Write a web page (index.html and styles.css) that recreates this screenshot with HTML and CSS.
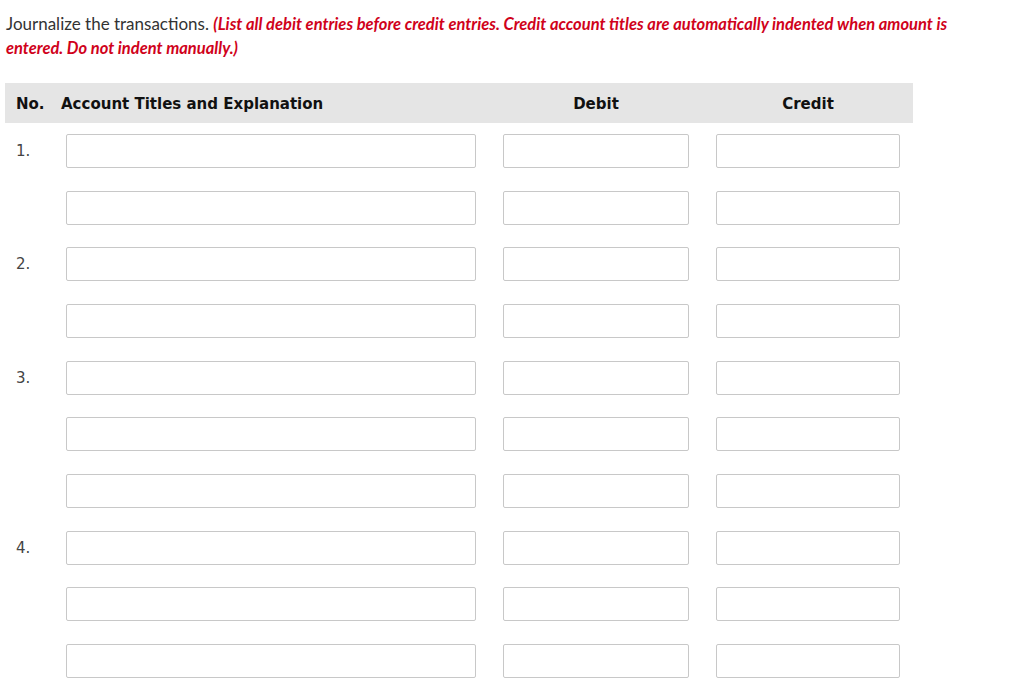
FILE: index.html
```html
<!DOCTYPE html>
<html lang="en">
<head>
  <meta charset="UTF-8" />
  <title>Journalize the transactions</title>
  <link rel="stylesheet" href="styles.css">
</head>
<body>

<p class="instr">Journalize the transactions. <em>(List all debit entries before credit entries. Credit account titles are automatically indented when amount is entered. Do not indent manually.)</em></p>

<div class="journal">
  <div class="jrow head">
    <div class="no">No.</div>
    <div class="acct">Account Titles and Explanation</div>
    <div class="amt">Debit</div>
    <div class="amt">Credit</div>
  </div>
  <div id="rows"></div>
</div>

<script>
const entries = [1, null, 2, null, 3, null, null, 4, null, null];
const rows = document.getElementById('rows');
entries.forEach(n => {
  const div = document.createElement('div');
  div.className = 'jrow line';
  div.innerHTML = `<div class="no">${n ? n + '.' : ''}</div>
    <div><input class="acct-in" type="text"></div>
    <div><input class="amt-in" type="text"></div>
    <div><input class="amt-in cr" type="text"></div>`;
  rows.appendChild(div);
});
</script>
</body>
</html>
```

FILE: styles.css
```css
* { margin: 0; padding: 0; box-sizing: border-box; }
body {
  font-family: Lato, sans-serif;
  background: white;
  color: #333;
}
.instr {
  font-size: 17px;
  line-height: 24px;
  padding: 12px 0 0 6px;
  width: 960px;
}
.instr em {
  color: #d0021b;
  font-size: 16.5px;
  line-height: 24px;
  font-weight: bold;
  font-style: italic;
}
.journal {
  margin: 23px 0 0 5px;
  width: 908px;
  font-family: "DejaVu Sans", Verdana, sans-serif;
}
.jrow {
  display: grid;
  grid-template-columns: 61px 437px 213px 184px;
  align-items: center;
}
.head {
  background: #e5e5e5;
  height: 40px;
  padding-top: 2px;
  font-weight: bold;
  font-size: 15px;
  color: #111;
  margin-bottom: 11px;
}
.head .no { padding-left: 11px; }
.head .acct { margin-left: -5px; white-space: nowrap; }
.head .amt { width: 186px; text-align: center; }
.head .amt:last-child { width: 184px; }
.line {
  height: 56.67px;
  align-items: start;
}
.line .no {
  padding-left: 11px;
  font-size: 15px;
  line-height: 34px;
  color: #444;
}
input {
  display: block;
  height: 34px;
  border: 1px solid #c8c8c8;
  border-radius: 2px;
  background: white;
}
.acct-in { width: 410px; }
.amt-in { width: 186px; }
.amt-in.cr { width: 184px; }
```
